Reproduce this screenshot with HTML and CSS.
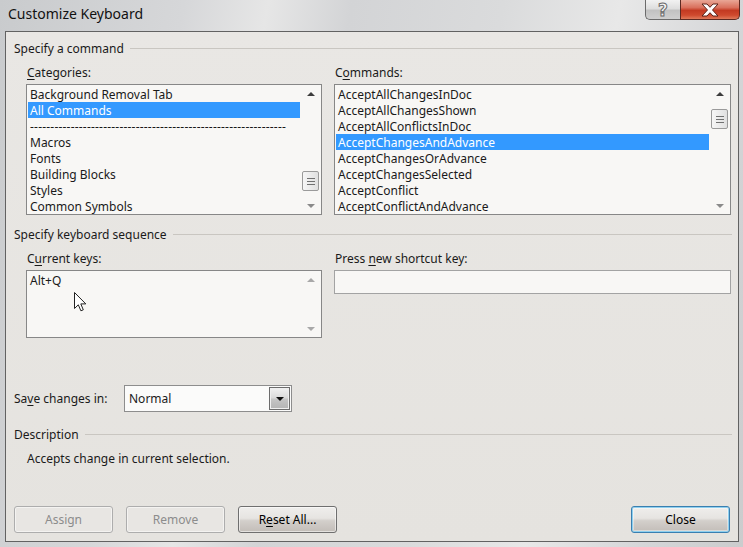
FILE: index.html
```html
<!DOCTYPE html>
<html>
<head>
<meta charset="utf-8">
<title>Customize Keyboard</title>
<link rel="stylesheet" href="styles.css">
</head>
<body>
<div class="window">
  <div class="titlebar">
    <div class="title">Customize Keyboard</div>
    <div class="caption">
      <div class="cap-help"><span>?</span></div>
      <div class="cap-close">
        <svg width="22" height="14" viewBox="0 0 22 14"><path d="M3 1h5l3 3.3L14 1h5l-5.5 6 5.5 6h-5l-3-3.3L8 13H3l5.5-6z" fill="#fff" stroke="#5a2218" stroke-width="1" stroke-linejoin="round"/></svg>
      </div>
    </div>
  </div>
  <div class="client">
    <div class="ghead first"><span>Specify a command</span></div>
    <div class="cols">
      <div class="col">
        <div class="label"><u>C</u>ategories:</div>
        <div class="listbox lb-tall">
          <div class="items">
            <div class="item">Background Removal Tab</div>
            <div class="item sel">All Commands</div>
            <div class="item"><span class="dashes">---------------------------------------------------------------</span></div>
            <div class="item">Macros</div>
            <div class="item">Fonts</div>
            <div class="item">Building Blocks</div>
            <div class="item">Styles</div>
            <div class="item">Common Symbols</div>
          </div>
          <div class="vscroll">
            <div class="sb-btn"><i class="tri-up"></i></div>
            <div class="track"><div class="thumb" style="margin-top:69px"><i></i><i></i><i></i></div></div>
            <div class="sb-btn"><i class="tri-down"></i></div>
          </div>
        </div>
      </div>
      <div class="col">
        <div class="label">C<u>o</u>mmands:</div>
        <div class="listbox lb-tall">
          <div class="items">
            <div class="item">AcceptAllChangesInDoc</div>
            <div class="item">AcceptAllChangesShown</div>
            <div class="item">AcceptAllConflictsInDoc</div>
            <div class="item sel">AcceptChangesAndAdvance</div>
            <div class="item">AcceptChangesOrAdvance</div>
            <div class="item">AcceptChangesSelected</div>
            <div class="item">AcceptConflict</div>
            <div class="item">AcceptConflictAndAdvance</div>
          </div>
          <div class="vscroll">
            <div class="sb-btn"><i class="tri-up"></i></div>
            <div class="track"><div class="thumb" style="margin-top:7px"><i></i><i></i><i></i></div></div>
            <div class="sb-btn"><i class="tri-down"></i></div>
          </div>
        </div>
      </div>
    </div>

    <div class="ghead second"><span>Specify keyboard sequence</span></div>
    <div class="cols">
      <div class="col">
        <div class="label">C<u>u</u>rrent keys:</div>
        <div class="listbox lb-short">
          <div class="items">
            <div class="item">Alt+Q</div>
          </div>
          <div class="vscroll">
            <div class="sb-btn"><i class="tri-up dim"></i></div>
            <div class="track"></div>
            <div class="sb-btn"><i class="tri-down dim"></i></div>
          </div>
        </div>
      </div>
      <div class="col">
        <div class="label">Press <u>n</u>ew shortcut key:</div>
        <div class="textbox"></div>
      </div>
    </div>

    <div class="saverow">
      <div class="savelabel">Sa<u>v</u>e changes in:</div>
      <div class="combo">
        <div class="combo-text">Normal</div>
        <div class="combo-btn"><i class="tri-down black"></i></div>
      </div>
    </div>

    <div class="ghead third"><span>Description</span></div>
    <div class="desc">Accepts change in current selection.</div>

    <div class="buttons">
      <button class="btn dis">Assign</button>
      <button class="btn dis">Remove</button>
      <button class="btn">R<u>e</u>set All...</button>
      <button class="btn def">Close</button>
    </div>
  </div>

  <svg class="cursor" width="13" height="20" viewBox="0 0 13 20"><path d="M0.5 0.5V16.5L4.3 12.8L6.9 18.8L9.3 17.8L6.8 11.9H11.8Z" fill="#fff" stroke="#222" stroke-width="1" stroke-linejoin="miter"/></svg>
</div>
</body>
</html>
```

FILE: styles.css
```css
* { box-sizing: border-box; }
html, body { margin: 0; padding: 0; }
body {
  width: 743px;
  height: 547px;
  overflow: hidden;
  font-family: "Noto Sans", "Open Sans", sans-serif;
  font-size: 12px;
  color: #1a1a1a;
}
u { text-decoration: underline; text-underline-offset: 2px; }

.window {
  position: relative;
  width: 743px;
  height: 547px;
  background: linear-gradient(100deg, #c9cbcd 0%, #d6d7d9 22%, #e6e6e6 32%, #d3d4d6 42%, #dadbdc 60%, #e8e8e8 74%, #d5d6d8 88%, #cbcccd 100%);
}

.titlebar {
  height: 31px;
  display: flex;
  align-items: flex-start;
}
.title {
  margin: 4px 0 0 8px;
  font-size: 14px;
  line-height: 20px;
  color: #111;
}
.caption {
  margin-left: auto;
  margin-right: 3px;
  display: flex;
}
.cap-help {
  width: 35px;
  height: 20px;
  border: 1px solid #6b6b6b;
  border-top: none;
  border-right: none;
  border-radius: 0 0 0 5px;
  background: linear-gradient(#f2f2f2 0%, #dedede 45%, #c2c2c2 55%, #cfcfcf 100%);
  display: flex;
  align-items: center;
  justify-content: center;
}
.cap-help span {
  font-family: "DejaVu Sans", sans-serif;
  font-size: 17px;
  font-weight: bold;
  line-height: 18px;
  color: #f4f4f4;
  -webkit-text-stroke: 1px #6a6a6a;
}
.cap-close {
  width: 60px;
  height: 20px;
  border: 1px solid #5c2a22;
  border-top: none;
  border-radius: 0 0 5px 0;
  background: linear-gradient(#e9a796 0%, #d9705c 40%, #c33a22 55%, #cf4a2e 80%, #e07a5a 100%);
  display: flex;
  align-items: center;
  justify-content: center;
}

.client {
  margin-left: 5px;
  width: 734px;
  height: 511px;
  border: 1px solid #626262;
  background: linear-gradient(#e9e7e4, #e5e3df);
}

.ghead {
  display: flex;
  align-items: center;
  height: 16px;
  padding-left: 8px;
  margin-right: 6px;
}
.ghead span {
  line-height: 16px;
  padding-top: 2px;
}
.ghead::after {
  content: "";
  flex: 1;
  height: 1px;
  background: #c9c6c1;
  margin-left: 6px;
}
.ghead.first { margin-top: 8px; }
.ghead.second { margin-top: 11px; }
.ghead.third { margin-top: 14px; }

.cols {
  display: grid;
  grid-template-columns: 296px 397px;
  column-gap: 12px;
  padding-left: 20px;
  margin-top: 8px;
}
.label {
  height: 16px;
  line-height: 16px;
  padding-top: 1px;
  padding-left: 1px;
  margin-bottom: 4px;
}

.listbox {
  display: flex;
  border: 1px solid #878787;
  background: #f8f7f5;
}
.lb-tall { height: 131px; }
.lb-short { height: 68px; }
.items {
  flex: 1;
  padding: 1px;
  min-width: 0;
}
.item {
  height: 16px;
  line-height: 16px;
  padding-top: 1px;
  padding-left: 2px;
  white-space: nowrap;
}
.item.sel { background: #3399ff; color: #fff; }
.dashes {
  letter-spacing: 0.2px;
}

.vscroll {
  width: 20px;
  display: flex;
  flex-direction: column;
}
.sb-btn {
  height: 17px;
  display: flex;
  align-items: center;
  justify-content: center;
}
.track { flex: 1; }
.tri-up, .tri-down {
  display: block;
  width: 0;
  height: 0;
  border-left: 4px solid transparent;
  border-right: 4px solid transparent;
}
.tri-up { border-bottom: 4px solid #3c3c3c; }
.tri-down { border-top: 4px solid #8a8a8a; }
.tri-up.dim { border-bottom-color: #a8a8a8; }
.tri-down.dim { border-top-color: #a8a8a8; }
.tri-down.black { border-top-color: #111; }
.thumb {
  width: 17px;
  height: 20px;
  margin-left: 1px;
  border: 1px solid #9a9a9a;
  border-radius: 2px;
  background: linear-gradient(90deg, #f6f6f6, #e0e0e0);
  display: flex;
  flex-direction: column;
  align-items: center;
  justify-content: center;
  gap: 2px;
}
.thumb i {
  display: block;
  width: 8px;
  height: 1px;
  background: #707070;
}

.textbox {
  height: 24px;
  border: 1px solid #a3a3a3;
  background: #f8f7f5;
}

.saverow {
  display: flex;
  align-items: center;
  margin-top: 47px;
  padding-left: 8px;
}
.savelabel {
  width: 110px;
  line-height: 16px;
}
.combo {
  width: 168px;
  height: 27px;
  border: 1px solid #8d8d8d;
  background: #fbfbfa;
  display: flex;
  align-items: center;
  padding: 1px;
}
.combo-text {
  flex: 1;
  padding-left: 3px;
  line-height: 16px;
}
.combo-btn {
  width: 21px;
  height: 23px;
  border: 1px solid #6c6c6c;
  box-shadow: inset 0 0 0 1px #efefef;
  background: linear-gradient(#f1f1f1 0%, #dcdcdc 45%, #c4c4c4 55%, #b4b4b4 100%);
  display: flex;
  align-items: center;
  justify-content: center;
}

.desc {
  margin-top: 9px;
  padding-left: 21px;
  height: 16px;
  line-height: 16px;
}

.buttons {
  display: flex;
  gap: 13px;
  margin-top: 39px;
  padding-left: 8px;
  padding-right: 8px;
}
.btn {
  width: 99px;
  height: 27px;
  margin: 0;
  padding: 0;
  font: inherit;
  color: #000;
  border: 1px solid #6f6f6f;
  border-radius: 3px;
  background: linear-gradient(#efeeec 0%, #e6e4e1 45%, #d3cfcb 55%, #c2bdb8 100%);
  box-shadow: inset 0 0 0 1px rgba(255,255,255,0.55);
}
.btn.dis {
  color: #8c8c8c;
  border-color: #adadad;
  background: #e8e6e3;
  box-shadow: inset 0 0 0 1px rgba(255,255,255,0.5);
}
.btn.def {
  margin-left: auto;
  border-color: #3a7fb0;
  box-shadow: inset 0 0 0 1px #8fd0ef, inset 0 0 0 2px rgba(255,255,255,0.4);
}

.cursor {
  position: absolute;
  left: 74px;
  top: 292px;
}
```
